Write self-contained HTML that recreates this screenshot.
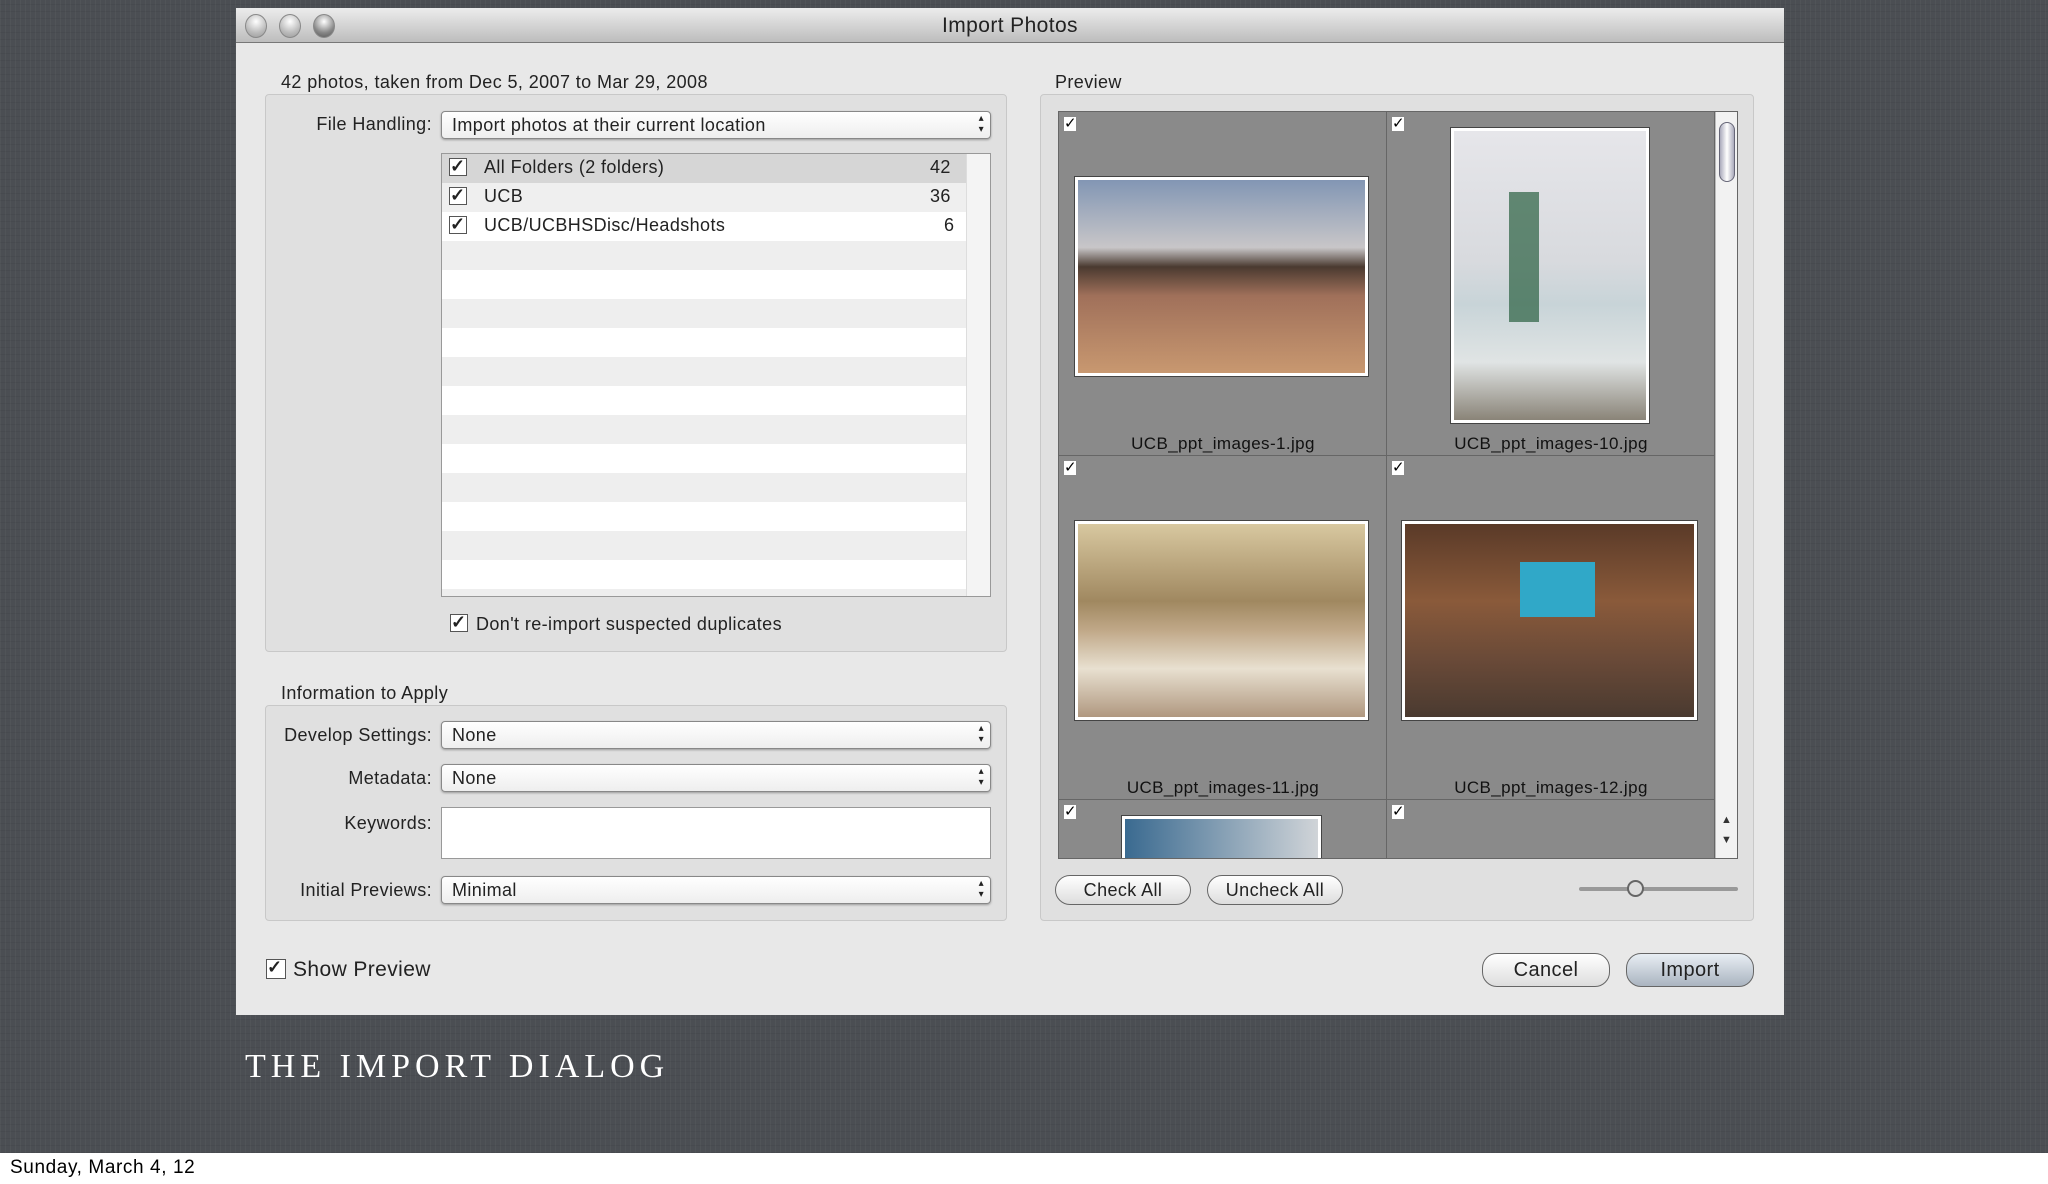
<!DOCTYPE html>
<html><head><meta charset="utf-8"><style>
*{margin:0;padding:0;box-sizing:border-box}
body{width:2048px;height:1184px;position:relative;overflow:hidden;background:#fff;font-family:"Liberation Sans",sans-serif;font-size:18px;letter-spacing:.4px;color:#222}
.bg{position:absolute;left:0;top:0;width:2048px;height:1153px;background:#4b4e53;background-image:repeating-linear-gradient(90deg,rgba(255,255,255,.03) 0 1px,transparent 1px 5px),repeating-linear-gradient(0deg,rgba(0,0,0,.05) 0 1px,transparent 1px 7px)}
.a{position:absolute}
.win{left:236px;top:8px;width:1548px;height:1007px;background:#e8e8e8}
.tb{left:236px;top:8px;width:1548px;height:35px;background:linear-gradient(#ececec,#bdbdbd);border-bottom:1px solid #777;text-align:center;font-size:21px;line-height:35px;color:#222}
.light{width:22px;height:24px;border-radius:50%;background:radial-gradient(circle at 50% 30%,#fff,#bbb 60%,#999);border:1px solid #888;top:14px}
.box{background:#e0e0e0;border:1px solid #c8c8c8;border-radius:4px}
.pop{background:linear-gradient(#fff,#eee);border:1px solid #888;border-radius:4px;box-shadow:0 1px 2px #999;padding-left:10px;line-height:26px}
.pop:after{content:"▴\A▾";white-space:pre;position:absolute;right:6px;top:1px;font-size:10px;line-height:11px}
.lbl{text-align:right;width:200px}
.cb{width:18px;height:18px;border:1px solid #555;background:#fff;font-size:18px;line-height:14px;font-weight:bold}
.btn{background:linear-gradient(#fff,#ddd);border:1px solid #666;border-radius:15px;text-align:center;line-height:28px;font-size:18px}
.cell{background:#8a8a8a;border-right:1px solid #666;border-bottom:1px solid #666}
.cap{color:#111;font-size:17px;text-align:center;width:328px}
.ph{border:3px solid #fff;outline:1px solid #444}
.ck{font-size:15px;color:#000;background:#fff;width:12px;height:14px;line-height:14px}
</style></head><body>
<div class="bg"></div>
<div class="a win"></div>
<div class="a tb">Import Photos</div>
<div class="a light" style="left:245px"></div><div class="a light" style="left:279px"></div><div class="a light" style="left:313px;background:radial-gradient(circle at 50% 30%,#fff,#888 60%,#555)"></div>

<div class="a" style="left:281px;top:72px">42 photos, taken from Dec 5, 2007 to Mar 29, 2008</div>
<div class="a box" style="left:265px;top:94px;width:742px;height:558px"></div>
<div class="a lbl" style="left:232px;top:114px">File Handling:</div>
<div class="a pop" style="left:441px;top:111px;width:550px;height:28px">Import photos at their current location</div>
<div class="a" style="left:441px;top:153px;width:550px;height:444px;border:1px solid #999;background:repeating-linear-gradient(#fff 0 29px,#eeeeee 29px 58px)"></div>
<div class="a" style="left:966px;top:154px;width:24px;height:442px;background:#f4f4f4;border-left:1px solid #ddd"></div>
<div class="a" style="left:442px;top:154px;width:524px;height:29px;background:#d6d6d6"></div>
<div class="a" style="left:442px;top:183px;width:524px;height:29px;background:#efefef"></div>
<div class="a cb" style="left:449px;top:158px">✓</div><div class="a" style="left:484px;top:157px">All Folders (2 folders)</div><div class="a" style="left:930px;top:157px">42</div>
<div class="a cb" style="left:449px;top:187px">✓</div><div class="a" style="left:484px;top:186px">UCB</div><div class="a" style="left:930px;top:186px">36</div>
<div class="a cb" style="left:449px;top:216px">✓</div><div class="a" style="left:484px;top:215px">UCB/UCBHSDisc/Headshots</div><div class="a" style="left:944px;top:215px">6</div>
<div class="a cb" style="left:450px;top:614px">✓</div><div class="a" style="left:476px;top:614px">Don't re-import suspected duplicates</div>

<div class="a" style="left:281px;top:683px">Information to Apply</div>
<div class="a box" style="left:265px;top:705px;width:742px;height:216px"></div>
<div class="a lbl" style="left:232px;top:725px">Develop Settings:</div>
<div class="a pop" style="left:441px;top:721px;width:550px;height:28px">None</div>
<div class="a lbl" style="left:232px;top:768px">Metadata:</div>
<div class="a pop" style="left:441px;top:764px;width:550px;height:28px">None</div>
<div class="a lbl" style="left:232px;top:813px">Keywords:</div>
<div class="a" style="left:441px;top:807px;width:550px;height:52px;background:#fff;border:1px solid #999"></div>
<div class="a lbl" style="left:232px;top:880px">Initial Previews:</div>
<div class="a pop" style="left:441px;top:876px;width:550px;height:28px">Minimal</div>

<div class="a" style="left:1055px;top:72px">Preview</div>
<div class="a box" style="left:1040px;top:94px;width:714px;height:827px"></div>
<div class="a" style="left:1058px;top:111px;width:680px;height:748px;background:#8a8a8a;border:1px solid #666;overflow:hidden">
 <div class="a cell" style="left:0;top:0;width:328px;height:344px"></div>
 <div class="a cell" style="left:328px;top:0;width:328px;height:344px"></div>
 <div class="a cell" style="left:0;top:344px;width:328px;height:344px"></div>
 <div class="a cell" style="left:328px;top:344px;width:328px;height:344px"></div>
 <div class="a cell" style="left:0;top:688px;width:328px;height:344px"></div>
 <div class="a cell" style="left:328px;top:688px;width:328px;height:344px"></div>
 <div class="a ck" style="left:5px;top:5px">✓</div><div class="a ck" style="left:333px;top:5px">✓</div>
 <div class="a ck" style="left:5px;top:349px">✓</div><div class="a ck" style="left:333px;top:349px">✓</div>
 <div class="a ck" style="left:5px;top:693px">✓</div><div class="a ck" style="left:333px;top:693px">✓</div>
 <div class="a ph" style="left:16px;top:65px;width:293px;height:199px;background:linear-gradient(#8296b4 0%,#c8c6c8 35%,#4a3a30 45%,#a0705a 60%,#c89870 100%)"></div>
 <div class="a ph" style="left:392px;top:16px;width:198px;height:295px;background:linear-gradient(#e6e6ea 0%,#d8dade 45%,#c8d4d8 60%,#e0e4e4 80%,#8a8478 100%)"></div>
 <div class="a" style="left:450px;top:80px;width:30px;height:130px;background:#2a6040;opacity:.7"></div>
 <div class="a ph" style="left:16px;top:409px;width:293px;height:199px;background:linear-gradient(#d8c8a0 0%,#a08860 40%,#c0a888 55%,#e8e0d0 75%,#b09880 100%)"></div>
 <div class="a ph" style="left:343px;top:409px;width:295px;height:199px;background:linear-gradient(#5a3a28 0%,#8a5a3a 40%,#6a4a38 70%,#4a3a30 100%)"></div>
 <div class="a" style="left:461px;top:450px;width:75px;height:55px;background:#30a8c8"></div>
 <div class="a ph" style="left:63px;top:704px;width:199px;height:60px;background:linear-gradient(90deg,#3a6a90,#d0d4d8)"></div>
 <div class="a cap" style="left:0;top:322px">UCB_ppt_images-1.jpg</div>
 <div class="a cap" style="left:328px;top:322px">UCB_ppt_images-10.jpg</div>
 <div class="a cap" style="left:0;top:666px">UCB_ppt_images-11.jpg</div>
 <div class="a cap" style="left:328px;top:666px">UCB_ppt_images-12.jpg</div>
 <div class="a" style="left:656px;top:0;width:24px;height:748px;background:#f2f2f2;border-left:1px solid #bbb"></div>
 <div class="a" style="left:660px;top:10px;width:16px;height:60px;border-radius:8px;background:linear-gradient(90deg,#aab,#fff,#aab);border:1px solid #667"></div>
 <div class="a" style="left:662px;top:698px;font-size:11px;line-height:20px;color:#333">▲<br>▼</div>
</div>
<div class="a btn" style="left:1055px;top:875px;width:136px;height:30px">Check All</div>
<div class="a btn" style="left:1207px;top:875px;width:136px;height:30px">Uncheck All</div>
<div class="a" style="left:1579px;top:887px;width:159px;height:4px;background:#999;border-radius:2px"></div>
<div class="a" style="left:1627px;top:880px;width:17px;height:17px;border-radius:50%;border:2px solid #666;background:#ddd"></div>

<div class="a cb" style="left:266px;top:959px;width:20px;height:20px">✓</div>
<div class="a" style="left:293px;top:958px;font-size:21px">Show Preview</div>
<div class="a btn" style="left:1482px;top:953px;width:128px;height:34px;line-height:32px;font-size:20px">Cancel</div>
<div class="a btn" style="left:1626px;top:953px;width:128px;height:34px;line-height:32px;font-size:20px;background:linear-gradient(#e8eef4,#aab4c0)">Import</div>

<div class="a" style="left:245px;top:1048px;font-family:'Liberation Serif',serif;font-size:34px;color:#fff;letter-spacing:5px">THE IMPORT DIALOG</div>
<div class="a" style="left:10px;top:1157px;font-size:19px;letter-spacing:.6px;color:#000">Sunday, March 4, 12</div>
</body></html>
